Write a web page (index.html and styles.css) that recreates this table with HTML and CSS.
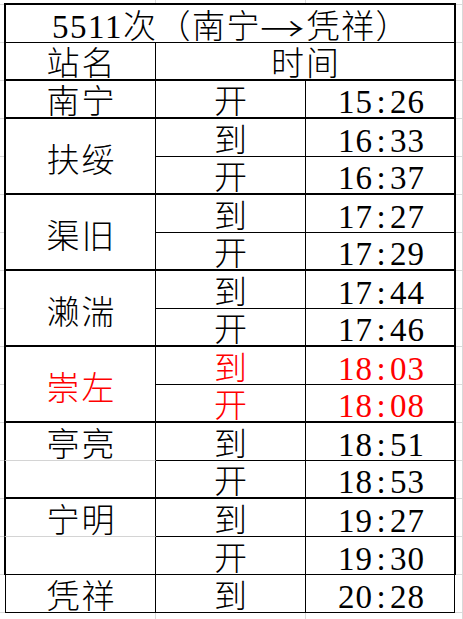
FILE: index.html
```html
<!DOCTYPE html>
<html lang="zh-CN">
<head>
<meta charset="utf-8">
<title>5511次（南宁→凭祥）</title>
<link rel="stylesheet" href="styles.css">
</head>
<body>
<div class="sheet">
  <div class="c title">5511次（南宁<span class="arrow">→</span>凭祥）</div>

  <div class="c c1 b2">站名</div>
  <div class="c wide b2">时间</div>

  <div class="c c1 b2">南宁</div>
  <div class="c c2 b2">开</div>
  <div class="c c3 b2 t">15<span class="colon">:</span>26</div>

  <div class="c c1 b2 mid rs2">扶绥</div>
  <div class="c c2 b1">到</div>
  <div class="c c3 b1 t">16<span class="colon">:</span>33</div>
  <div class="c c2 b2">开</div>
  <div class="c c3 b2 t">16<span class="colon">:</span>37</div>

  <div class="c c1 b2 mid rs2">渠旧</div>
  <div class="c c2 b1">到</div>
  <div class="c c3 b1 t">17<span class="colon">:</span>27</div>
  <div class="c c2 b2">开</div>
  <div class="c c3 b2 t">17<span class="colon">:</span>29</div>

  <div class="c c1 b2 mid rs2">濑湍</div>
  <div class="c c2 b1">到</div>
  <div class="c c3 b1 t">17<span class="colon">:</span>44</div>
  <div class="c c2 b2">开</div>
  <div class="c c3 b2 t">17<span class="colon">:</span>46</div>

  <div class="c c1 b2 mid rs2 red">崇左</div>
  <div class="c c2 b1 red">到</div>
  <div class="c c3 b1 t red">18<span class="colon">:</span>03</div>
  <div class="c c2 b2 red">开</div>
  <div class="c c3 b2 t red">18<span class="colon">:</span>08</div>

  <div class="c c1 bg">亭亮</div>
  <div class="c c2 b1">到</div>
  <div class="c c3 b1 t">18<span class="colon">:</span>51</div>
  <div class="c c1 b2"></div>
  <div class="c c2 b2">开</div>
  <div class="c c3 b2 t">18<span class="colon">:</span>53</div>

  <div class="c c1 bg">宁明</div>
  <div class="c c2 b1">到</div>
  <div class="c c3 b1 t">19<span class="colon">:</span>27</div>
  <div class="c c1 b1"></div>
  <div class="c c2 b1">开</div>
  <div class="c c3 b1 t">19<span class="colon">:</span>30</div>

  <div class="c c1 b1 thin-l">凭祥</div>
  <div class="c c2 b1">到</div>
  <div class="c c3 b1 t thin-r">20<span class="colon">:</span>28</div>
</div>
</body>
</html>
```

FILE: styles.css
```css
html, body {
  height: 100%;
}

body {
  margin: 0;
  background-color: #fff;
  background-image:
    linear-gradient(90deg, transparent 155px, #d9d9d9 155px 156px, transparent 156px 305px, #d9d9d9 305px 306px, transparent 306px 462px, #d9d9d9 462px 463px, transparent 463px),
    repeating-linear-gradient(180deg, #d9d9d9 0 1px, transparent 1px 38px);
  background-position: 0 0, 0 4px;
  font-family: "Liberation Serif", "Noto Sans CJK SC", serif;
  font-size: 33px;
  font-weight: 300;
  color: #000;
}

.sheet {
  margin: 3px 0 0 4px;
  display: grid;
  grid-template-columns: 152px 150px 150px;
  grid-template-rows: 40px repeat(15, 38px);
  width: 452px;
}

.c {
  box-sizing: border-box;
  background: #fff;
  display: flex;
  justify-content: center;
  align-items: flex-end;
  line-height: 29px;
  letter-spacing: 2px;
  padding-left: 2px;
  white-space: nowrap;
  border: 0 solid #000;
}

.title {
  grid-column: 1 / 4;
  border-top-width: 2px;
  border-left-width: 2px;
  border-right-width: 2px;
  border-bottom-width: 1px;
  letter-spacing: 1.5px;
}

.arrow {
  display: inline-block;
  font-family: "Noto Sans CJK SC", sans-serif;
  font-weight: 300;
  transform: scaleX(1.35);
  margin: 0 6px 0 5px;
}

.wide {
  grid-column: 2 / 4;
  border-right-width: 2px;
}

.c1 {
  border-left-width: 2px;
  border-right-width: 1px;
}

.c2 {
  border-right-width: 1px;
}

.c3 {
  border-right-width: 2px;
}

.b1 {
  border-bottom-width: 1px;
}

.b2 {
  border-bottom-width: 2px;
}

.bg {
  border-bottom: 1px solid #d4d4d4;
}

.rs2 {
  grid-row: span 2;
}

.mid {
  align-items: center;
  padding-top: 10px;
}

.t {
  letter-spacing: 1px;
  padding-left: 3px;
}

.colon {
  margin: 0 3.5px;
}

.red {
  color: #f00;
}

.thin-l {
  border-left-width: 1px;
  margin-left: 1px;
}

.thin-r {
  border-right-width: 1px;
  margin-right: 1px;
}
```
